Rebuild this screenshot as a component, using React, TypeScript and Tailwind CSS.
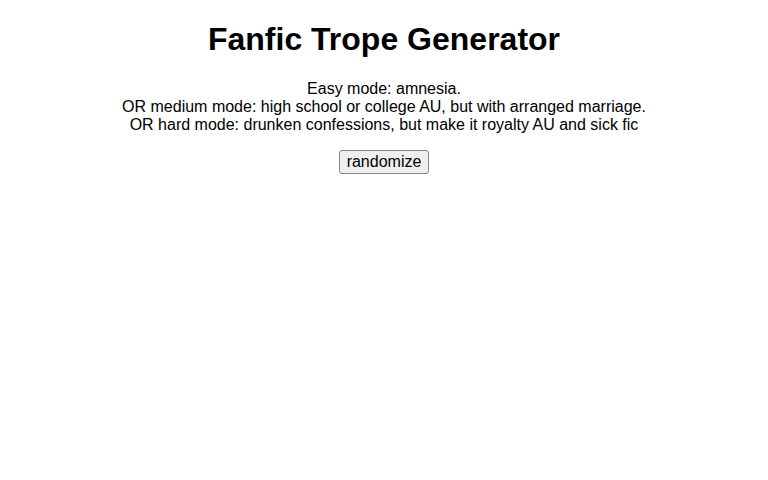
export default function App() {
  return (
    <div className="text-center font-['Liberation_Sans',Arial,sans-serif] text-black bg-white min-h-screen">
      {/* Title */}
      <h1 className="text-[32px] leading-[36.8px] font-bold pt-[21.44px] mb-[21.44px]">
        Fanfic Trope Generator
      </h1>

      {/* Tropes */}
      <p className="text-base leading-[18px] mb-[16px]">
        Easy mode: amnesia.
        <br />
        OR medium mode: high school or college AU, but with arranged marriage.
        <br />
        OR hard mode: drunken confessions, but make it royalty AU and sick fic
      </p>

      <button className="text-base leading-[18px] px-[7px] py-[2px] bg-[#efefef] border border-[#858585] rounded-[3px] hover:bg-[#e5e5e5]">
        randomize
      </button>
    </div>
  );
}
